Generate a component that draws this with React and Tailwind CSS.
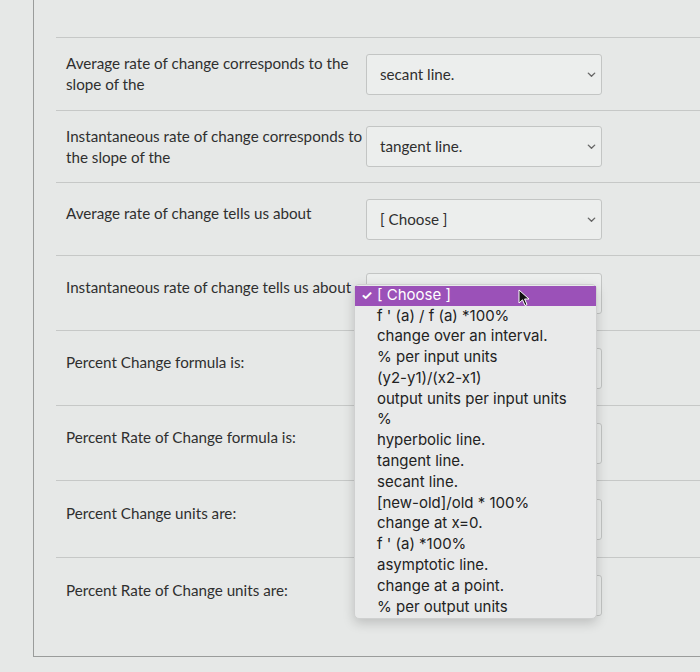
import React from 'react';

const rows = [
	{ label: 'Average rate of change corresponds to the slope of the', value: 'secant line.', h: 'h-[73px]', two: true },
	{ label: 'Instantaneous rate of change corresponds to the slope of the', value: 'tangent line.', h: 'h-[72px]', two: true },
	{ label: 'Average rate of change tells us about', value: '[ Choose ]', h: 'h-[73px]' },
	{ label: 'Instantaneous rate of change tells us about', value: '', h: 'h-[75px]', open: true },
	{ label: 'Percent Change formula is:', value: '', h: 'h-[75px]' },
	{ label: 'Percent Rate of Change formula is:', value: '', h: 'h-[75px]' },
	{ label: 'Percent Change units are:', value: '', h: 'h-[77px]' },
	{ label: 'Percent Rate of Change units are:', value: '', h: 'h-[76px]' },
];

const options = [
	"f ' (a) / f (a) *100%",
	'change over an interval.',
	'% per input units',
	'(y2-y1)/(x2-x1)',
	'output units per input units',
	'%',
	'hyperbolic line.',
	'tangent line.',
	'secant line.',
	'[new-old]/old * 100%',
	'change at x=0.',
	"f ' (a) *100%",
	'asymptotic line.',
	'change at a point.',
	'% per output units',
];

const Chevron = () => (
	<svg className="w-[11px] h-[11px] text-[#666]" viewBox="0 0 12 12" fill="none" stroke="currentColor" strokeWidth="1.5" strokeLinecap="round" strokeLinejoin="round">
		<path d="M2.5 4.5 L6 8 L9.5 4.5" />
	</svg>
);

const Menu = () => (
	<div className="absolute left-[-12px] top-[11px] w-[243px] z-10 bg-[#e9eaea] border border-[#cfd0d0] rounded-[5px] shadow-[0_4px_12px_rgba(0,0,0,0.18)] py-[1px] text-[15px] text-[#222]" style={{ fontFamily: 'Inter, "Noto Sans", sans-serif' }}>
		<div className="relative flex items-center h-[20px] bg-[#9b51b8] text-white">
			<span className="w-[22px] pl-[6px] text-[13px] font-bold">✓</span>
			<span>[ Choose ]</span>
			<svg className="absolute left-[163px] top-[3px] w-[13px] h-[18px]" viewBox="0 0 13 18">
				<path d="M1 1 L1 14 L4.5 10.8 L7 16.5 L9 15.6 L6.6 10 L11 10 Z" fill="#111" stroke="#fff" strokeWidth="1" />
			</svg>
		</div>
		{options.map((o) => (
			<div key={o} className="h-[20.8px] leading-[20.8px] pl-[22px] whitespace-nowrap">{o}</div>
		))}
	</div>
);

export default function App() {
	return (
		<div className="w-[700px] h-[672px] overflow-hidden bg-[#e6e8e7]" style={{ fontFamily: 'Lato, "Open Sans", sans-serif' }}>
			<div className="ml-[33px] h-[657px] border-l border-b border-[#9a9c9b] pl-[22px] pt-[37px]">
				{rows.map((r, i) => (
					<div key={i} className={`${r.h} border-t border-[#c6c8c7] flex items-center`}>
						<div className={`w-[310px] pl-[10px] text-[15.2px] leading-[21px] text-[#2f2f2f] ${r.two ? '' : 'mb-[11px]'}`}>{r.label}</div>
						<div className="relative">
							<div className="w-[236px] h-[41px] border border-[#c3c5c4] rounded-[3px] bg-[#eceeed] flex items-center justify-between pl-[13px] pr-[4px] text-[15.2px] text-[#2f2f2f]">
								<span>{r.value}</span>
								<Chevron />
							</div>
							{r.open && <Menu />}
						</div>
					</div>
				))}
			</div>
		</div>
	);
}
